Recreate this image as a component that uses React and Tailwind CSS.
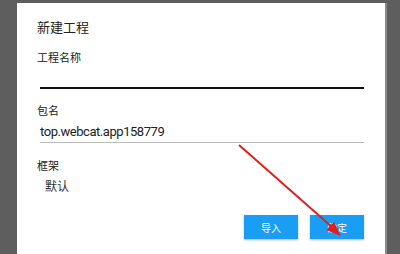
export default function App() {
  const cjk = { fontFamily: '"Noto Sans CJK SC", "Noto Sans", sans-serif' };
  return (
    <div className="relative w-[400px] h-[254px] overflow-hidden bg-[#5e5e5e] pt-[3px] pl-[17px] pr-[13px]" style={cjk}>
      <div className="h-[300px] bg-white border-r-2 border-[#8a8a8a] pl-[20px] pr-[21px] flex flex-col">
        <div className="mt-[14px] h-[20px] leading-[20px] text-[13px] text-[#222]">新建工程</div>
        <div className="mt-[12px] h-[16px] leading-[16px] text-[11px] text-[#222]">工程名称</div>
        <div className="ml-[3px] mt-[22px] h-[2px] bg-[#111]"></div>
        <div className="mt-[13px] h-[16px] leading-[16px] text-[11px] text-[#222]">包名</div>
        <div className="ml-[3px] mt-[5px] h-[18px] leading-[18px] text-[13px] tracking-[-0.45px] text-[#222]" style={{ fontFamily: 'Roboto, "Noto Sans", sans-serif' }}>top.webcat.app158779</div>
        <div className="ml-[3px] mt-[1px] h-[1px] bg-[#999] border-b border-[#bbb]"></div>
        <div className="mt-[14px] h-[16px] leading-[16px] text-[11px] text-[#222]">框架</div>
        <div className="ml-[8px] mt-[5px] h-[16px] leading-[16px] text-[12px] text-[#333]">默认</div>
        <div className="mt-[21px] flex justify-end gap-[12px]">
          <div className="w-[54px] h-[24px] bg-[#1a9ef5] text-white text-[10px] flex items-center justify-center shadow-[0_1px_2px_rgba(0,0,0,0.3)]">导入</div>
          <div className="w-[54px] h-[24px] bg-[#1a9ef5] text-white text-[10px] flex items-center justify-center shadow-[0_1px_2px_rgba(0,0,0,0.3)]">确定</div>
        </div>
      </div>
      <svg className="absolute left-0 top-0" width="400" height="254" viewBox="0 0 400 254">
        <line x1="239" y1="145" x2="332" y2="227" stroke="#e0201e" strokeWidth="2" />
        <polygon points="341,236 326,230 334,222" fill="#e0201e" />
      </svg>
    </div>
  );
}
